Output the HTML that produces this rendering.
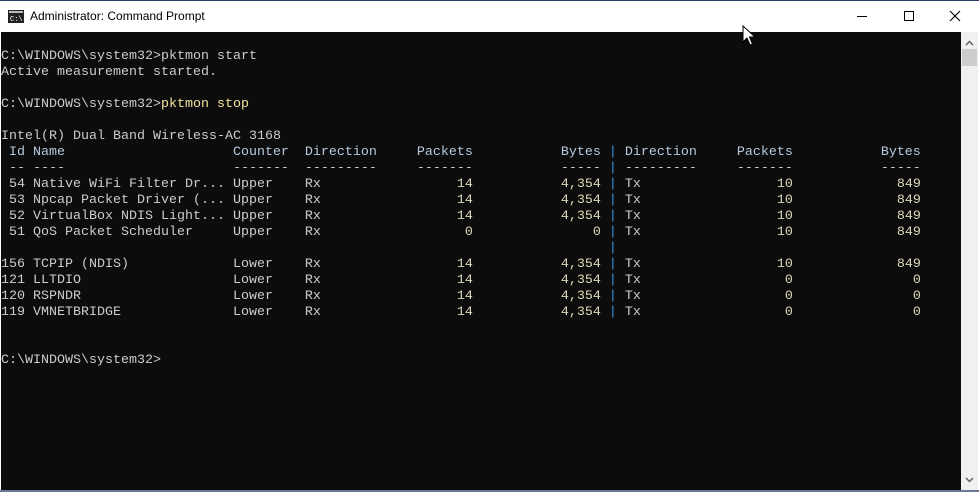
<!DOCTYPE html>
<html><head><meta charset="utf-8"><style>
html,body{margin:0;padding:0;width:979px;height:491px;overflow:hidden;background:#fff}
#win{position:absolute;left:0;top:0;width:979px;height:491px;border-top:1px solid #2b3a67;box-sizing:border-box}
#title{position:absolute;left:30px;top:8px;font:12px "Liberation Sans",sans-serif;color:#000}
#con{position:absolute;left:1px;top:31px;width:960px;height:458px;background:#0c0c0c;overflow:hidden}
pre{margin:0;position:absolute;left:0;top:1px;font:13.33px/16px "Liberation Mono",monospace;color:#cccccc;letter-spacing:0}
.y{color:#f2e6a0}.b{color:#3a96dd}.h{color:#b6c9dd}.n{color:#ded7b8}
#sb{position:absolute;left:961px;top:31px;width:17px;height:458px;background:#f0f0f0}
#bot{position:absolute;left:0;top:489px;width:979px;height:2px;background:#6b7a95}
</style></head><body><div id="win">
<svg style="position:absolute;left:8px;top:9px" width="16" height="13"><rect x="0" y="0" width="16" height="13" fill="#222"/><rect x="1" y="1" width="14" height="2" fill="#bbb"/><text x="2" y="11" font-size="7" font-family="Liberation Mono" fill="#fff">C:\</text></svg>
<div id="title">Administrator: Command Prompt</div>
<svg style="position:absolute;left:850px;top:5px" width="125" height="20">
<line x1="7" y1="10.5" x2="17" y2="10.5" stroke="#000"/>
<rect x="54.5" y="5.5" width="9" height="9" fill="none" stroke="#000"/>
<path d="M100 5 L110 15 M110 5 L100 15" stroke="#000" stroke-width="1.1"/>
</svg>
<div id="con"><pre>

C:\WINDOWS\system32&gt;pktmon start
Active measurement started.

C:\WINDOWS\system32&gt;<span class="y">pktmon stop</span>

Intel(R) Dual Band Wireless-AC 3168
<span class="h"> Id Name                     Counter  Direction     Packets           Bytes</span> <span class="b">|</span> <span class="h">Direction     Packets           Bytes</span>
<span class="h"> -- ----                     -------  ---------     -------           -----</span> <span class="b">|</span> <span class="h">---------     -------           -----</span>
 54 Native WiFi Filter Dr... Upper    Rx                 <span class="n">14</span>           <span class="n">4,354</span> <span class="b">|</span> Tx                 <span class="n">10</span>             <span class="n">849</span>
 53 Npcap Packet Driver (... Upper    Rx                 <span class="n">14</span>           <span class="n">4,354</span> <span class="b">|</span> Tx                 <span class="n">10</span>             <span class="n">849</span>
 52 VirtualBox NDIS Light... Upper    Rx                 <span class="n">14</span>           <span class="n">4,354</span> <span class="b">|</span> Tx                 <span class="n">10</span>             <span class="n">849</span>
 51 QoS Packet Scheduler     Upper    Rx                  <span class="n">0</span>               <span class="n">0</span> <span class="b">|</span> Tx                 <span class="n">10</span>             <span class="n">849</span>
                                                                            <span class="b">|</span>
156 TCPIP (NDIS)             Lower    Rx                 <span class="n">14</span>           <span class="n">4,354</span> <span class="b">|</span> Tx                 <span class="n">10</span>             <span class="n">849</span>
121 LLTDIO                   Lower    Rx                 <span class="n">14</span>           <span class="n">4,354</span> <span class="b">|</span> Tx                  <span class="n">0</span>               <span class="n">0</span>
120 RSPNDR                   Lower    Rx                 <span class="n">14</span>           <span class="n">4,354</span> <span class="b">|</span> Tx                  <span class="n">0</span>               <span class="n">0</span>
119 VMNETBRIDGE              Lower    Rx                 <span class="n">14</span>           <span class="n">4,354</span> <span class="b">|</span> Tx                  <span class="n">0</span>               <span class="n">0</span>


C:\WINDOWS\system32&gt;</pre></div>
<div id="sb">
<svg style="position:absolute;left:4px;top:8px" width="9" height="6"><path d="M1 5 L4.5 1.5 L8 5" stroke="#606060" stroke-width="1.5" fill="none"/></svg>
<div style="position:absolute;left:1px;top:17px;width:15px;height:17px;background:#cdcdcd"></div>
<svg style="position:absolute;left:4px;top:445px" width="9" height="6"><path d="M1 1 L4.5 4.5 L8 1" stroke="#606060" stroke-width="1.5" fill="none"/></svg>
</div>
<div id="bot"></div>
<svg style="position:absolute;left:742px;top:24px" width="16" height="24"><path d="M1 1 L1 17 L5 13 L8 20 L10.5 19 L7.5 12 L13 12 Z" fill="#fff" stroke="#000" stroke-width="1"/></svg>
</div></body></html>
